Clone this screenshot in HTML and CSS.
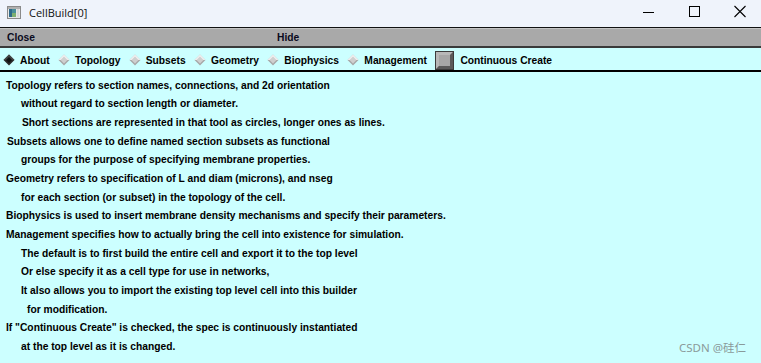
FILE: index.html
```html
<!DOCTYPE html>
<html>
<head>
<meta charset="utf-8">
<link rel="stylesheet" href="styles.css">
</head>
<body>
<div class="window">
  <div class="titlebar">
    <svg class="appicon" width="14" height="13" viewBox="0 0 14 13">
      <rect x="0.5" y="0.5" width="13" height="12" fill="#e8e8e8" stroke="#8a8a8a"/>
      <rect x="1" y="1" width="12" height="2" fill="#b0b0b0"/>
      <rect x="2" y="3" width="7" height="8" fill="#4a8f9a"/>
      <rect x="2" y="3" width="3" height="8" fill="#2f6a8a"/>
      <rect x="5" y="7" width="4" height="4" fill="#7fb070"/>
      <rect x="10" y="3" width="2" height="8" fill="#d8d8d8"/>
    </svg>
    <span class="title">CellBuild[0]</span>
    <div class="controls">
      <svg width="46" height="27" viewBox="0 0 46 27"><line x1="20" y1="12.5" x2="31" y2="12.5" stroke="#000" stroke-width="1"/></svg>
      <svg width="46" height="27" viewBox="0 0 46 27"><rect x="20.5" y="6.5" width="10" height="10" fill="none" stroke="#000" stroke-width="1"/></svg>
      <svg width="46" height="27" viewBox="0 0 46 27"><path d="M19.5 6 L30.5 17 M30.5 6 L19.5 17" stroke="#000" stroke-width="1.1"/></svg>
    </div>
  </div>
  <div class="cmdbar">
    <span class="cmd cmd-close">Close</span>
    <span class="cmd">Hide</span>
  </div>
  <div class="tabbar">
    <span class="tab">
      <svg class="dia" width="12" height="12" viewBox="0 0 12 12"><polygon points="6,0.5 11.5,6 6,11.5 0.5,6" fill="#2a2a2a"/><polygon points="6,0.5 11.5,6 0.5,6" fill="#444"/><polygon points="6,3 9,6 6,9 3,6" fill="#111"/></svg>
      About
    </span>
    <span class="tab">
      <svg class="dia" width="12" height="12" viewBox="0 0 12 12"><polygon points="6,0.5 11.5,6 6,11.5 0.5,6" fill="#a8a8a8"/><polygon points="6,0.5 11.5,6 0.5,6" fill="#f2f2f2"/><polygon points="6,2.5 9.5,6 6,9.5 2.5,6" fill="#cfcfcf"/></svg>
      Topology
    </span>
    <span class="tab">
      <svg class="dia" width="12" height="12" viewBox="0 0 12 12"><polygon points="6,0.5 11.5,6 6,11.5 0.5,6" fill="#a8a8a8"/><polygon points="6,0.5 11.5,6 0.5,6" fill="#f2f2f2"/><polygon points="6,2.5 9.5,6 6,9.5 2.5,6" fill="#cfcfcf"/></svg>
      Subsets
    </span>
    <span class="tab">
      <svg class="dia" width="12" height="12" viewBox="0 0 12 12"><polygon points="6,0.5 11.5,6 6,11.5 0.5,6" fill="#a8a8a8"/><polygon points="6,0.5 11.5,6 0.5,6" fill="#f2f2f2"/><polygon points="6,2.5 9.5,6 6,9.5 2.5,6" fill="#cfcfcf"/></svg>
      Geometry
    </span>
    <span class="tab">
      <svg class="dia" width="12" height="12" viewBox="0 0 12 12"><polygon points="6,0.5 11.5,6 6,11.5 0.5,6" fill="#a8a8a8"/><polygon points="6,0.5 11.5,6 0.5,6" fill="#f2f2f2"/><polygon points="6,2.5 9.5,6 6,9.5 2.5,6" fill="#cfcfcf"/></svg>
      Biophysics
    </span>
    <span class="tab">
      <svg class="dia" width="12" height="12" viewBox="0 0 12 12"><polygon points="6,0.5 11.5,6 6,11.5 0.5,6" fill="#a8a8a8"/><polygon points="6,0.5 11.5,6 0.5,6" fill="#f2f2f2"/><polygon points="6,2.5 9.5,6 6,9.5 2.5,6" fill="#cfcfcf"/></svg>
      Management
    </span>
    <span class="tab">
      <svg class="chk" width="19" height="19" viewBox="0 0 19 19">
        <rect x="0" y="0" width="19" height="19" fill="#3c3c3c"/>
        <rect x="1" y="1" width="17" height="17" fill="#8c8c8c"/>
        <polygon points="1,1 18,1 15,4 4,4 4,15 1,18" fill="#b8b8b8"/>
        <polygon points="18,1 18,18 1,18 4,15 15,15 15,4" fill="#5a5a5a"/>
        <rect x="4" y="4" width="11" height="11" fill="#a6a6a6"/>
      </svg>
      Continuous Create
    </span>
  </div>
  <div class="content">
    <p class="l0">Topology refers to section names, connections, and 2d orientation</p>
    <p class="l1">without regard to section length or diameter.</p>
    <p class="l1b">Short sections are represented in that tool as circles, longer ones as lines.</p>
    <p class="l0b">Subsets allows one to define named section subsets as functional</p>
    <p class="l1">groups for the purpose of specifying membrane properties.</p>
    <p class="l0">Geometry refers to specification of L and diam (microns), and nseg</p>
    <p class="l1">for each section (or subset) in the topology of the cell.</p>
    <p class="l0">Biophysics is used to insert membrane density mechanisms and specify their parameters.</p>
    <p class="l0">Management specifies how to actually bring the cell into existence for simulation.</p>
    <p class="l1">The default is to first build the entire cell and export it to the top level</p>
    <p class="l1">Or else specify it as a cell type for use in networks,</p>
    <p class="l1">It also allows you to import the existing top level cell into this builder</p>
    <p class="l2">for modification.</p>
    <p class="l0">If "Continuous Create" is checked, the spec is continuously instantiated</p>
    <p class="l1">at the top level as it is changed.</p>
    <span class="watermark">CSDN @硅仁</span>
  </div>
</div>
</body>
</html>
```
FILE: styles.css
```css
* { box-sizing: border-box; }
html, body { margin: 0; padding: 0; }
body {
  width: 761px;
  height: 363px;
  overflow: hidden;
  background: #ccffff;
  font-family: "Liberation Sans", Arial, sans-serif;
}
.window {
  display: flex;
  flex-direction: column;
  height: 363px;
}
.titlebar {
  height: 28px;
  background: #eff3fb;
  display: flex;
  align-items: center;
  border-bottom: 1px solid #111;
  flex: none;
}
.appicon { margin-left: 7px; margin-top: -2px; }
.title {
  margin-left: 8px;
  font-family: "Open Sans", "Noto Sans", sans-serif;
  font-size: 11px;
  color: #111;
  margin-top: -2px;
}
.controls {
  margin-left: auto;
  display: flex;
  align-self: flex-start;
}
.controls svg { display: block; }
.cmdbar {
  height: 20px;
  flex: none;
  background: #a9a9a9;
  border-top: 1px solid #c4c4c4;
  border-bottom: 2px solid #3a3a3a;
  display: flex;
  align-items: center;
  font-weight: bold;
  font-size: 10.25px;
  color: #0a0a20;
}
.cmd-close { margin-left: 7px; width: 270px; }
.tabbar {
  height: 24px;
  flex: none;
  display: flex;
  align-items: center;
  border-bottom: 2px solid #000;
  font-weight: bold;
  font-size: 10.25px;
  color: #000;
  padding-left: 3px;
  padding-top: 2px;
}
.tab {
  display: flex;
  align-items: center;
  margin-right: 8.4px;
}
.dia { margin-right: 5px; }
.chk { margin-right: 6px; }
.content {
  position: relative;
  flex: 1;
  padding-top: 4.5px;
  font-weight: bold;
  font-size: 10.25px;
  color: #000;
}
.content p {
  margin: 0;
  height: 18.7px;
  line-height: 18.7px;
  white-space: pre;
}
.l0 { padding-left: 6px; }
.l0b { padding-left: 7px; }
.l1 { padding-left: 21px; }
.l1b { padding-left: 22px; }
.l2 { padding-left: 27px; }
.watermark {
  position: absolute;
  right: 15px;
  bottom: 8px;
  font-family: "Noto Sans", "Noto Sans CJK SC", sans-serif;
  font-weight: normal;
  font-size: 11.5px;
  color: #8a9a9a;
}
```
